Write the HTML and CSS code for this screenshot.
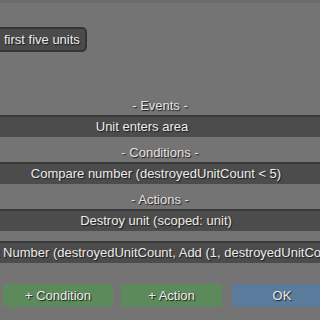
FILE: index.html
```html
<!DOCTYPE html>
<html lang="en">

<head>
    <meta charset="UTF-8">
    <meta name="viewport" content="width=device-width, initial-scale=1.0">
    <title>Trigger Editor</title>
    <link rel="stylesheet" href="styles.css">
</head>

<body>

    <div class="topline"></div>

    <button class="trigger-btn">first five units</button>

    <div class="section-label">- Events -</div>
    <div class="row row-event">Unit enters area</div>

    <div class="section-label">- Conditions -</div>
    <div class="row">Compare number (destroyedUnitCount &lt; 5)</div>

    <div class="section-label">- Actions -</div>
    <div class="row">Destroy unit (scoped: unit)</div>
    <div class="row row-long"><span>Set Number (destroyedUnitCount, Add (1, destroyedUnitCount))</span></div>

    <div class="actions">
        <button class="btn btn-green">+ Condition</button>
        <button class="btn btn-green">+ Action</button>
        <button class="btn btn-blue">OK</button>
    </div>

</body>

</html>
```

FILE: styles.css
```css
body {
    margin: 0;
    width: 320px;
    height: 320px;
    overflow: hidden;
    background-color: #747474;
    font-family: "Liberation Sans", Arial, sans-serif;
    font-size: 13px;
    color: #ececec;
    text-shadow: 1px 1px 1px #1a1a1a;
}

.topline {
    height: 3px;
    background-color: #6e696f;
}

.trigger-btn {
    display: block;
    margin: 24px 0 0 -10px;
    height: 25px;
    padding: 0 5px 0 12px;
    background-color: #4b4b4b;
    border: 2px solid #343434;
    border-radius: 5px;
    font-family: inherit;
    font-size: 13px;
    color: #ececec;
    text-shadow: inherit;
}

.section-label {
    margin-top: 8px;
    margin-bottom: 1px;
    line-height: 16px;
    text-align: center;
    color: #e4e4e4;
}

.trigger-btn + .section-label {
    margin-top: 46px;
}

.row {
    height: 20px;
    line-height: 20px;
    padding-right: 8px;
    background-color: #4c4c4c;
    border-top: 2px solid #3a3a3a;
    text-align: center;
    white-space: nowrap;
    overflow: hidden;
}

.row-event {
    padding-right: 36px;
}

.row-long {
    margin-top: 10px;
    padding-right: 0;
    text-align: left;
}

.row-long span {
    margin-left: -20px;
}

.actions {
    display: flex;
    gap: 8px;
    margin-top: 21px;
    padding-left: 3px;
}

.btn {
    height: 23px;
    border: none;
    border-radius: 3px;
    font-family: inherit;
    font-size: 13px;
    color: #ececec;
    text-shadow: 1px 1px 1px #1a1a1a;
    flex-shrink: 0;
}

.btn-green {
    background-color: #5d8a5b;
    width: 110px;
}

.btn-green + .btn-green {
    width: 101px;
}

.btn-blue {
    background-color: #5a7b9c;
    width: 100px;
    margin-left: 2px;
}
```
